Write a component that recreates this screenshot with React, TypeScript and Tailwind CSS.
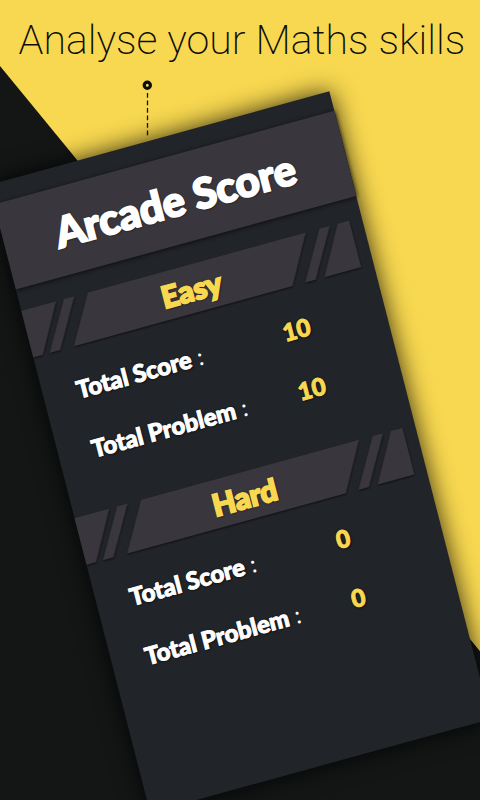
type Score = { level: string; score: number; problems: number };

const scores: Score[] = [
  { level: 'Easy', score: 10, problems: 10 },
  { level: 'Hard', score: 0, problems: 0 },
];

// chunky lettering with a dark rim round it
const chunky = 'font-black [-webkit-text-stroke:1px_currentColor] [text-shadow:0_0_2px_#0c0d10,1px_1px_2px_#0c0d10]';
const chunkyLarge = 'font-black [-webkit-text-stroke:2px_currentColor] [text-shadow:0_0_2px_#0c0d10,1px_1px_2px_#0c0d10]';

function Pointer() {
  return (
    <svg className="ml-[142px] block h-14 w-[11px]" viewBox="0 0 11 56" aria-hidden="true">
      <circle cx="5.3" cy="5.3" r="3.1" fill="none" stroke="#0b0c0c" strokeWidth="3.2" />
      <path d="M5.5 13V56" stroke="#131615" strokeWidth="1.3" strokeDasharray="4.8 2.7" />
    </svg>
  );
}

function Banner({ title }: { title: string }) {
  return (
    <div className="relative mr-[13px] flex h-12 items-center justify-center">
      <svg
        className="absolute inset-0 h-full w-full overflow-visible drop-shadow-[0_1px_1px_#0c0d10]"
        viewBox="0 0 340 48"
        preserveAspectRatio="none"
        fill="#39373d"
        aria-hidden="true"
      >
        <path d="M0 0H36L10 48H0Z" />
        <path d="M44 0H55L28 48H17Z" />
        <path d="M69 0H295L269 48H42Z" />
        <path d="M309 0H320L293 48H282Z" />
        <path d="M328 0H340V48H302Z" />
      </svg>
      <h2 className={`relative text-[30px] leading-8 text-[#f8d850] ${chunkyLarge}`}>{title}</h2>
    </div>
  );
}

function Row({ label, value }: { label: string; value: number }) {
  return (
    <div className="flex h-[61px] items-center pl-[34px]">
      <dt className="w-[214px] text-2xl whitespace-nowrap text-white">
        <span className={chunky}>{label}</span> :
      </dt>
      <dd className={`text-2xl text-[#f8d850] ${chunky}`}>{value}</dd>
    </div>
  );
}

export default function App() {
  return (
    <main className="relative h-screen overflow-hidden bg-[#f8d850]">
      <div className="absolute inset-0 bg-[#131615] [clip-path:polygon(0_8.25%,100%_81.4%,100%_100%,0_100%)]" />

      <div className="relative">
        <h1 className="pt-4 pl-1 text-center font-['Roboto',sans-serif] text-[41px] leading-[48px] font-extralight whitespace-nowrap text-[#0b0c0c]">
          Analyse your Maths skills
        </h1>
        <div className="mt-4">
          <Pointer />
        </div>

        <article className="mt-[49px] -ml-[11px] w-[353px] origin-top-left -rotate-[15.4deg] -skew-x-1 bg-[#212429] pt-5 pb-[122px] font-['Lato',sans-serif] shadow-[0_0_24px_rgba(0,0,0,0.8)]">
          <header className="flex h-[88px] items-center justify-center bg-[#39373d] shadow-[0_1px_4px_#0c0d10]">
            <h2 className={`text-[42px] leading-[48px] text-white ${chunkyLarge}`}>Arcade Score</h2>
          </header>

          <div className="flex flex-col gap-8 pt-[22px]">
            {scores.map((s) => (
              <section key={s.level}>
                <Banner title={s.level} />
                <dl className="pt-3">
                  <Row label="Total Score" value={s.score} />
                  <Row label="Total Problem" value={s.problems} />
                </dl>
              </section>
            ))}
          </div>
        </article>
      </div>
    </main>
  );
}
